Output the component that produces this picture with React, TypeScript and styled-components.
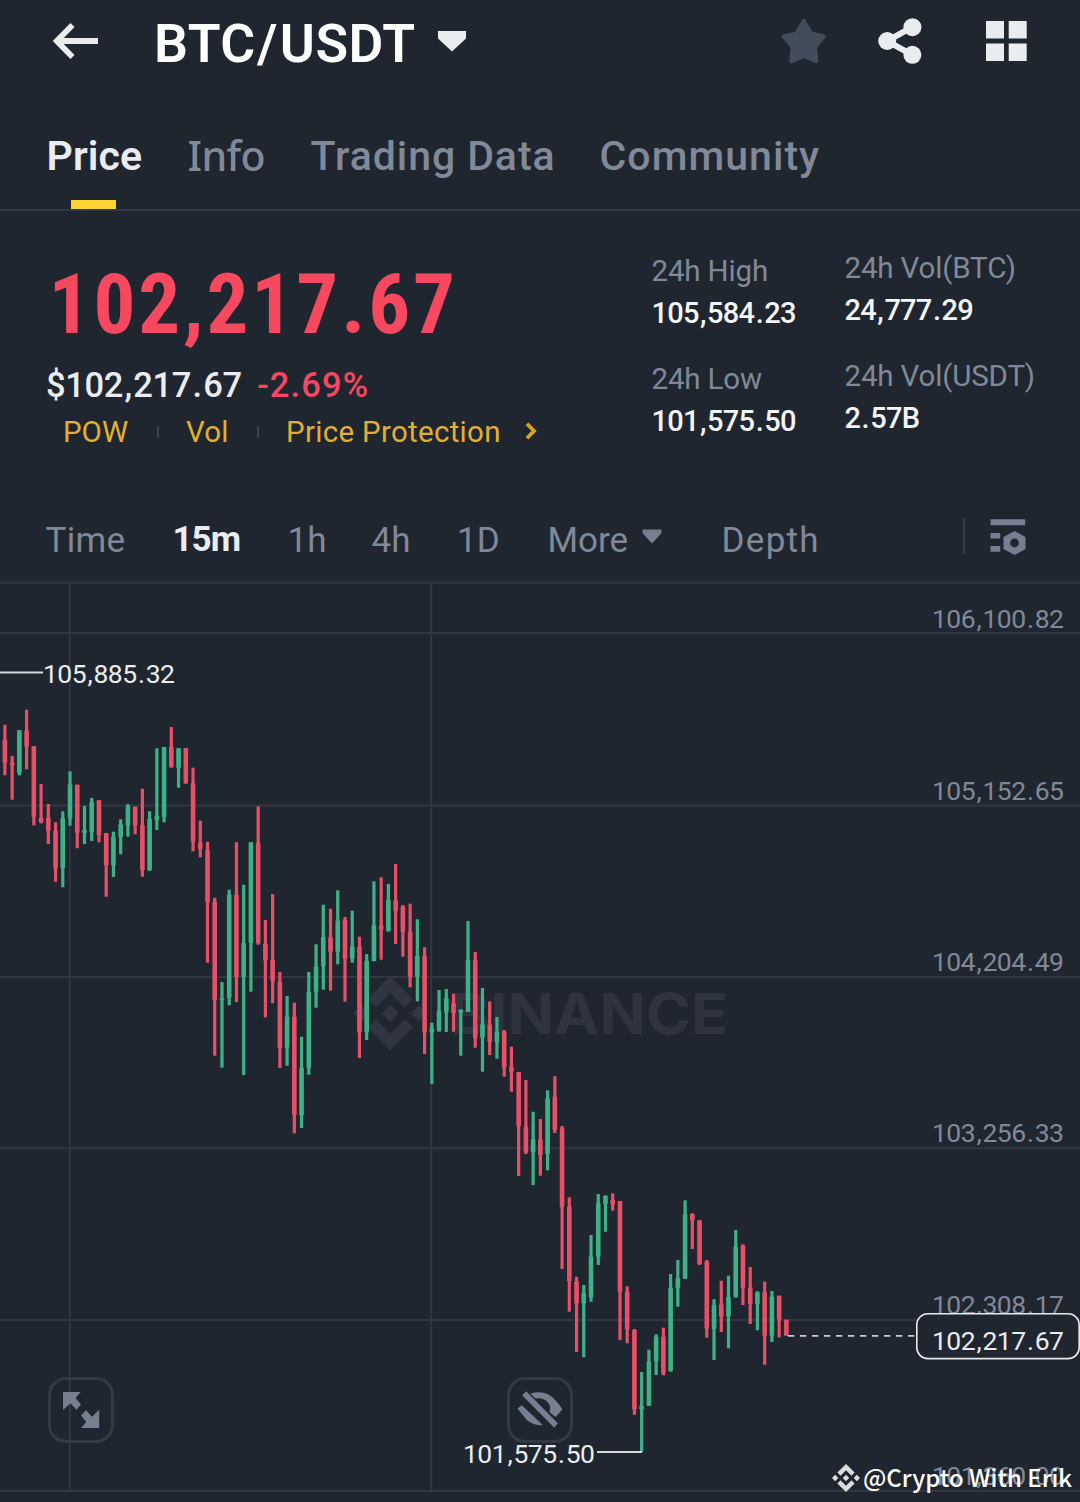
import React from "react";
import styled, { createGlobalStyle } from "styled-components";

const color = {
  bg: "#1f2630",
  text: "#eaecf0",
  muted: "#818998",
  icon: "#767f90",
  line: "#303742",
  up: "#3eb287",
  down: "#e85068",
  price: "#f6485f",
  yellow: "#fcd535",
  gold: "#e0b030",
};

const sans = `Roboto, "Noto Sans", sans-serif`;

const GlobalStyle = createGlobalStyle`
  * { box-sizing: border-box; }
  body { margin: 0; background: ${color.bg}; }
`;

const Screen = styled.main`
  width: 1080px;
  height: 1502px;
  overflow: hidden;
  display: flex;
  flex-direction: column;
  background: ${color.bg};
  color: ${color.text};
  font-family: ${sans};
  white-space: nowrap;
`;

/* ---------- header ---------- */

const Header = styled.header`
  height: 87px;
  flex: none;
  display: flex;
  align-items: center;
  padding: 0 53px 5px 52px;
`;

const Pair = styled.h1`
  width: 332px;
  margin: 5px 0 0 8px;
  padding-left: 46px;
  color: #fff;
  font-size: 53.5px;
  line-height: 60px;
  font-weight: 600;
  letter-spacing: 0.4px;
`;

const Slash = styled.span`
  margin: 0 2px 0 1.5px;
`;

const HeaderActions = styled.div`
  display: flex;
  align-items: center;
  margin-left: auto;
`;

const ActionIcon = styled.svg<{ $gap?: number }>`
  display: block;
  flex: none;
  margin-left: ${(p) => p.$gap ?? 0}px;
`;

/* ---------- tabs ---------- */

const Tabs = styled.nav`
  height: 124px;
  flex: none;
  display: flex;
  gap: 46px;
  padding: 44px 0 0 46.5px;
  border-bottom: 2px solid #303741;
`;

const Tab = styled.div<{ $width: number; $active?: boolean; $track: number }>`
  width: ${(p) => p.$width}px;
  display: flex;
  flex-direction: column;
  justify-content: space-between;
  color: ${(p) => (p.$active ? color.text : color.muted)};
  font-size: 41px;
  line-height: 50px;
  font-weight: ${(p) => (p.$active ? 600 : 500)};
  letter-spacing: ${(p) => p.$track}px;
`;

const SerifTab = styled(Tab)`
  font-family: "Noto Sans", sans-serif;
  font-weight: 550;
  line-height: 48px;
`;

const Underline = styled.span`
  width: 45px;
  height: 9px;
  margin-left: 24.5px;
  background: ${color.yellow};
`;

/* ---------- quote ---------- */

const Quote = styled.section`
  height: 289px;
  flex: none;
  display: grid;
  grid-template-columns: 605.5px 193px 1fr;
  padding-left: 46px;
`;

const Main = styled.div`
  padding-top: 49px;
`;

const LastPrice = styled.div`
  padding-left: 2.5px;
  color: ${color.price};
  font-family: "Roboto Condensed", Roboto, sans-serif;
  font-size: 83px;
  line-height: 90px;
  font-weight: 700;
  letter-spacing: 2.95px;
`;

const Fiat = styled.div`
  display: flex;
  margin-top: 12px;
  height: 46px;
  font-size: 34.5px;
  line-height: 46px;
  font-weight: 500;
  letter-spacing: -0.4px;
`;

const FiatPrice = styled.span`
  width: 211px;
`;

const Change = styled.span`
  color: ${color.price};
  letter-spacing: 1.1px;
`;

const TagRow = styled.div`
  display: flex;
  align-items: center;
  height: 46px;
  margin-top: 1px;
  padding-left: 17px;
  color: ${color.gold};
  font-size: 29.5px;
`;

const Tag = styled.span<{ $width: number; $track?: number }>`
  width: ${(p) => p.$width}px;
  letter-spacing: ${(p) => p.$track ?? 0}px;
`;

const TagDivider = styled.i<{ $after: number }>`
  width: 2px;
  height: 12px;
  margin-right: ${(p) => p.$after}px;
  background: #3a414c;
`;

const TagArrow = styled.svg`
  margin-top: -2px;
`;

const StatColumn = styled.dl<{ $top: number }>`
  margin: ${(p) => p.$top}px 0 0;
  display: flex;
  flex-direction: column;
  gap: 24px;
`;

const StatLabel = styled.dt`
  color: ${color.muted};
  font-size: 29.5px;
  line-height: 42px;
  letter-spacing: -0.15px;
`;

const StatValue = styled.dd`
  margin: 0;
  color: #f3f5f8;
  font-size: 29px;
  line-height: 42px;
  font-weight: 500;
  letter-spacing: -0.75px;
`;

const Mark = styled.span`
  margin: 0 0.046em;
`;

/* Digits set tight, with air round the separators. */
const Figures = ({ value }: { value: string }) => (
  <>
    {value.split(/([.,])/).map((part, i) => (i % 2 ? <Mark key={i}>{part}</Mark> : part))}
  </>
);

/* ---------- intervals ---------- */

const Intervals = styled.nav`
  height: 84px;
  flex: none;
  display: grid;
  grid-template-columns: 127px 115px 84px 85.5px 90.5px 174px 1fr 2px 115px;
  align-items: center;
  padding-left: 45.5px;
  border-bottom: 3px solid #2a313c;
`;

const Interval = styled.div<{ $active?: boolean; $track?: number }>`
  display: flex;
  align-items: center;
  gap: 14px;
  margin-top: ${(p) => (p.$active ? -2 : 0)}px;
  color: ${(p) => (p.$active ? color.text : color.muted)};
  font-size: 35px;
  line-height: 42px;
  font-weight: ${(p) => (p.$active ? 700 : 400)};
  letter-spacing: ${(p) => p.$track ?? 0}px;
`;

const Separator = styled.i`
  height: 36px;
  margin-top: -9px;
  background: #363d48;
`;

const SettingsIcon = styled.svg`
  display: block;
  margin: -6px 0 0 25px;
`;

const MoreCaret = styled.svg`
  margin-top: -8px;
`;

/* ---------- chart ---------- */

const ChartArea = styled.section`
  position: relative;
  height: 918px;
  flex: none;
`;

const ChartSvg = styled.svg`
  display: block;
  font-family: ${sans};
  font-size: 26.5px;
  letter-spacing: -0.55px;
`;

const FloatingButton = styled.button<{ $left: number }>`
  position: absolute;
  left: ${(p) => p.$left}px;
  top: 793px;
  width: 66px;
  height: 66px;
  padding: 0;
  border: 3px solid #333a46;
  border-radius: 18px;
  background: transparent;
`;

const ButtonIcon = styled.svg`
  display: block;
  margin: -3px;
`;

const Attribution = styled.div`
  position: absolute;
  left: 832px;
  bottom: 6px;
  display: flex;
  align-items: center;
  gap: 3px;
  height: 36px;
  color: #fff;
`;

const Handle = styled.span`
  margin-top: -2px;
  font-family: "Noto Sans CJK SC", "Noto Sans", sans-serif;
  font-size: 24px;
  font-weight: 500;
  line-height: 36px;
`;

type Candle = ["u" | "d", number, number, number, number];

/* direction, high, body top, body bottom, low */
const candles: Candle[] = [
  ["d", 724.7, 740, 762.7, 775.3], ["d", 756, 762.7, 765.3, 799.7], ["u", 730.3, 730.3, 773, 775.3],
  ["d", 709.7, 730.7, 746.7, 769.3], ["d", 746.3, 746.3, 816.7, 825.3], ["d", 784, 818, 822, 823.3],
  ["d", 804, 818, 830.7, 844], ["d", 822.3, 830.7, 868.3, 881.7], ["u", 811.3, 818.3, 868.3, 887.3],
  ["u", 771.3, 784.3, 818.3, 825.7], ["d", 784.7, 784.7, 832.7, 848.3], ["u", 806, 830, 832.7, 844],
  ["u", 798, 802, 832, 841], ["d", 800.3, 800.3, 835, 842.3], ["d", 833, 833, 865.3, 896.7],
  ["u", 831.7, 836.7, 865.3, 877], ["u", 819.3, 824.3, 836.7, 854.3], ["u", 804, 806, 825.3, 836.7],
  ["d", 806.7, 806.7, 825.7, 834.3], ["d", 788.7, 825, 870, 876.7], ["u", 811.3, 819, 870, 871],
  ["u", 748.3, 815.7, 820, 830], ["u", 747, 747, 816.7, 822.3], ["d", 727, 747, 766.7, 767.7],
  ["u", 748.3, 748.3, 767.7, 787.7], ["d", 748.3, 748.3, 783.3, 783.7], ["d", 767.7, 783.3, 841.7, 851.3],
  ["d", 820.7, 842.7, 849, 857.3], ["d", 841.7, 850.3, 902, 962.7], ["d", 897.7, 901.7, 1000, 1055.7],
  ["u", 982, 998.3, 1000, 1067.7], ["u", 889.7, 895, 997.7, 1005.3], ["d", 842.3, 895, 977, 1002],
  ["u", 884.7, 943.3, 977, 1075], ["u", 842.3, 842.3, 942.7, 991.7], ["d", 806.3, 842.7, 943.3, 944.7],
  ["d", 920, 943.7, 960.3, 1017.3], ["d", 894, 960.3, 981, 1003.3], ["d", 972, 982, 1048, 1068],
  ["u", 996, 1016.7, 1047.7, 1065.7], ["d", 1002.7, 1016.7, 1115, 1133.3], ["u", 1036.7, 1067.7, 1115, 1128],
  ["u", 972, 992, 1067.7, 1074.7], ["u", 944.3, 966.7, 991.7, 1007.7], ["u", 904.7, 937.3, 966, 989.7],
  ["d", 908.7, 937.3, 951.7, 990.7], ["u", 890.3, 920.7, 951.7, 964.3], ["d", 917, 920, 958.7, 1001.7],
  ["u", 910.7, 946.7, 958.7, 962.7], ["d", 936.7, 946.7, 1032.3, 1058], ["u", 954, 961, 1032.3, 1040],
  ["u", 881.3, 925.3, 961, 961.3], ["d", 877.3, 925.7, 929.3, 959.7], ["u", 884, 900, 930.7, 931.7],
  ["d", 864, 900.7, 910.7, 944], ["d", 905, 906.7, 931.7, 956.7], ["d", 903.7, 931.7, 976.7, 987.3],
  ["u", 919.3, 956, 976.7, 1001.3], ["d", 947.3, 956, 1032.3, 1054], ["u", 1022.7, 1028.3, 1032.3, 1084],
  ["u", 990, 1011, 1031, 1031.7], ["u", 989, 998.3, 1012.3, 1032], ["d", 993.7, 1003.3, 1013.3, 1031.7],
  ["u", 1009.7, 1009.7, 1012.3, 1055.7], ["u", 921, 960, 1011.7, 1012], ["d", 952, 960.3, 1037.7, 1047.7],
  ["u", 988, 1024.3, 1037.7, 1071.7], ["d", 1001.3, 1024.7, 1041.7, 1055], ["u", 1017, 1032, 1041.7, 1058.7],
  ["d", 1030, 1031.7, 1067.3, 1076.7], ["d", 1046.7, 1066.7, 1071.7, 1091.7], ["d", 1072, 1072, 1126, 1176],
  ["d", 1080, 1126.7, 1152.3, 1154], ["u", 1111.7, 1139.3, 1152.3, 1185], ["d", 1119, 1139.3, 1155, 1175.7],
  ["u", 1090.3, 1098.3, 1154, 1170.3], ["d", 1076.3, 1096.7, 1130, 1133], ["d", 1126, 1128.3, 1206.7, 1269],
  ["d", 1197.3, 1206.7, 1281, 1311.7], ["d", 1276.7, 1281.7, 1303.3, 1352], ["u", 1285, 1293.3, 1303.3, 1357.3],
  ["u", 1235, 1256.7, 1297.3, 1301.7], ["u", 1194, 1203.3, 1256.7, 1265], ["u", 1195.3, 1196, 1204, 1231.7],
  ["d", 1193.3, 1200, 1204.7, 1210.7], ["d", 1201, 1201, 1291.7, 1340], ["d", 1286.3, 1291.7, 1329.3, 1343.3],
  ["d", 1329, 1330, 1409.3, 1414.7], ["u", 1372, 1406, 1409.3, 1452], ["u", 1349.7, 1361.7, 1405.7, 1406],
  ["u", 1334.3, 1336.7, 1361, 1375], ["d", 1327.7, 1336.7, 1373.3, 1375.3], ["u", 1274, 1287.7, 1371, 1371.7],
  ["u", 1260, 1278.3, 1287.7, 1306.7], ["u", 1200.3, 1214, 1278.3, 1279], ["d", 1213.3, 1214, 1220.3, 1249],
  ["d", 1220.3, 1220.3, 1264, 1265], ["d", 1260, 1261.3, 1328.3, 1337.7], ["u", 1299.3, 1305, 1329, 1360],
  ["d", 1280.7, 1304.3, 1316.7, 1332], ["u", 1275.7, 1297.3, 1316, 1348.3], ["u", 1230, 1246.7, 1296.7, 1297.7],
  ["d", 1244.3, 1245.7, 1287.7, 1305], ["d", 1267, 1287.7, 1304, 1324], ["u", 1291.3, 1292.3, 1304, 1330.3],
  ["d", 1281.7, 1292.3, 1335.7, 1364.7], ["u", 1291, 1296.7, 1335.7, 1342], ["d", 1295.7, 1295.7, 1319.3, 1337.3],
  ["d", 1319.7, 1319.7, 1335.7, 1335.7],
];

const gridRows = [
  { y: 633, label: "106,100.82", base: 628 },
  { y: 805.5, label: "105,152.65", base: 800 },
  { y: 977, label: "104,204.49", base: 971 },
  { y: 1148.3, label: "103,256.33", base: 1142 },
  { y: 1320, label: "102,308.17", base: 1314 },
  { y: 1491, label: "101,360.00", base: 1485 },
];

const firstX = 4.9;
const pitch = 7.236;

const BinanceMark = ({ fill }: { fill: string }) => (
  <path
    fill={fill}
    d="M38.73 53.2l24.59-24.58 24.6 24.6 14.3-14.31L63.32 0l-38.9 38.9zM0 63.31L14.3 49l14.31 14.31-14.31 14.3zM38.73 73.41L63.32 98l24.6-24.6 14.31 14.29-38.91 38.92-38.91-38.88zM98 63.31L112.3 49l14.31 14.3-14.31 14.32zM77.83 63.3L63.32 48.78 48.81 63.28l14.51 14.5z"
  />
);

const PriceLabel = ({ x, y, value }: { x: number; y: number; value: string }) => (
  <text x={x} y={y}>
    {value.split(/([.,])/).map((part, i) => (
      <tspan key={i} dx={i ? 1.4 : 0}>{part}</tspan>
    ))}
  </text>
);

const Chart = () => (
  <ChartSvg width="1080" height="918" viewBox="0 584 1080 918">
    <g stroke={color.line} strokeWidth="1.9">
      <path d="M69.8 584V1491M431.2 584V1491" />
      {gridRows.map((r) => (
        <path key={r.y} d={`M0 ${r.y}H1080`} />
      ))}
    </g>
    <g transform="translate(353.2 976.3) scale(.585)">
      <BinanceMark fill="#303541" />
    </g>
    <text x="450" y="1033.5" fontFamily="Inter, sans-serif" fontWeight="700" fontSize="57" letterSpacing="0" textLength="278" lengthAdjust="spacingAndGlyphs" fill="#2e333f">
      BINANCE
    </text>
    <g fill={color.muted}>
      {gridRows.map((r) => (
        <PriceLabel key={r.label} x={932} y={r.base} value={r.label} />
      ))}
    </g>
    {candles.map(([dir, high, top, bottom, low], i) => {
      const x = firstX + i * pitch;
      return (
        <g key={i} fill={dir === "u" ? color.up : color.down}>
          <rect x={x - 1.6} y={high} width="3.2" height={low - high} />
          <rect x={x - 2.3} y={top} width="4.6" height={bottom - top} />
        </g>
      );
    })}
    <path d="M0 672.5H43M597 1452H642" stroke="#d5dade" strokeWidth="1.8" />
    <path d="M788 1335.8H916" stroke="#c9ced6" strokeWidth="1.8" strokeDasharray="6.3 5.7" />
    <rect x="916.8" y="1313.8" width="162.4" height="44.8" rx="11" fill={color.bg} stroke="#e6e9ed" strokeWidth="1.6" />
    <g fill={color.text}>
      <PriceLabel x={43} y={682.5} value="105,885.32" />
      <PriceLabel x={463} y={1462.5} value="101,575.50" />
      <PriceLabel x={932} y={1349.5} value="102,217.67" />
    </g>
  </ChartSvg>
);

export default function App() {
  return (
    <>
      <GlobalStyle />
      <Screen>
        <Header>
          <ActionIcon width="48" height="40" viewBox="0 0 48 40" fill="none" stroke={color.text} strokeWidth="5.8">
            <path d="M46 20H5M20.5 4L4.8 20l15.7 16" />
          </ActionIcon>
          <Pair>
            BTC<Slash>/</Slash>USDT
          </Pair>
          <ActionIcon width="30" height="22" viewBox="0 0 30 22" fill={color.text} $gap={-3}>
            <path d="M1 1h28v7.5L15 21.5 1 8.5z" />
          </ActionIcon>
          <HeaderActions>
            <ActionIcon width="46" height="46" viewBox="781 18.5 46 46" fill="#434c5a" stroke="#434c5a" strokeWidth="4" strokeLinejoin="round">
              <path d="M803.8 21.3L811 34L823.8 37L815 47.5L816.3 61.8L803.8 56.5L791.3 61.8L792.6 47.5L783.8 37L796.6 34Z" />
            </ActionIcon>
            <ActionIcon width="44" height="46" viewBox="878 18 44 46" fill={color.text} stroke={color.text} strokeWidth="6" $gap={51}>
              <path d="M912.2 27.2L887 41l25.2 13.8" fill="none" />
              <g stroke="none">
                <circle cx="912.4" cy="27.2" r="9" />
                <circle cx="887.2" cy="41" r="9" />
                <circle cx="912.4" cy="54.8" r="9" />
              </g>
            </ActionIcon>
            <ActionIcon width="41" height="40" viewBox="0 0 41 40" fill={color.text} $gap={64}>
              <path d="M0 0h18v17.5H0zM22.7 0h18v17.5h-18zM0 22.5h18V40H0zM22.7 22.5h18V40h-18z" />
            </ActionIcon>
          </HeaderActions>
        </Header>

        <Tabs>
          <Tab $width={95} $track={0.1} $active>
            Price
            <Underline />
          </Tab>
          <SerifTab $width={77} $track={-0.6}>Info</SerifTab>
          <Tab $width={243} $track={0.93}>Trading Data</Tab>
          <Tab $width={222} $track={1.05}>Community</Tab>
        </Tabs>

        <Quote>
          <Main>
            <LastPrice>102,217.67</LastPrice>
            <Fiat>
              <FiatPrice>
                <Figures value="$102,217.67" />
              </FiatPrice>
              <Change>-2.69%</Change>
            </Fiat>
            <TagRow>
              <Tag $width={93.5}>POW</Tag>
              <TagDivider $after={27.5} />
              <Tag $width={70.5} $track={0.2}>Vol</Tag>
              <TagDivider $after={27.5} />
              <Tag $width={238.5} $track={0.3}>Price Protection</Tag>
              <TagArrow width="12" height="18" viewBox="0 0 12 18" fill="none" stroke="#dca61c" strokeWidth="3.8">
                <path d="M2 1.8L9 9l-7 7.2" />
              </TagArrow>
            </TagRow>
          </Main>
          <StatColumn $top={39}>
            <div>
              <StatLabel>24h High</StatLabel>
              <StatValue>
                <Figures value="105,584.23" />
              </StatValue>
            </div>
            <div>
              <StatLabel>24h Low</StatLabel>
              <StatValue>
                <Figures value="101,575.50" />
              </StatValue>
            </div>
          </StatColumn>
          <StatColumn $top={36}>
            <div>
              <StatLabel>24h Vol(BTC)</StatLabel>
              <StatValue>
                <Figures value="24,777.29" />
              </StatValue>
            </div>
            <div>
              <StatLabel>24h Vol(USDT)</StatLabel>
              <StatValue>
                <Figures value="2.57B" />
              </StatValue>
            </div>
          </StatColumn>
        </Quote>

        <Intervals>
          <Interval $track={0.3}>Time</Interval>
          <Interval $track={-1} $active>15m</Interval>
          <Interval>1h</Interval>
          <Interval>4h</Interval>
          <Interval>1D</Interval>
          <Interval>
            More
            <MoreCaret width="20" height="15" viewBox="0 0 20 15" fill={color.icon}>
              <path d="M.5.5h19V4L10 14.5.5 4z" />
            </MoreCaret>
          </Interval>
          <Interval $track={1.3}>Depth</Interval>
          <Separator />
          <SettingsIcon width="36" height="37" viewBox="991.5 519 36 37" fill={color.icon}>
            <path d="M992 519.3h34.7v6H992zM992 533h9.7v5.5H992zM992 546h9.7v5.8H992z" />
            <path fillRule="evenodd" d="M1016 531l11 6v12l-11 6-11-6v-12zM1016 538.6a4.4 4.4 0 1 0 0 8.8 4.4 4.4 0 0 0 0-8.8z" />
          </SettingsIcon>
        </Intervals>

        <ChartArea>
          <Chart />
          <FloatingButton $left={48} aria-label="Full screen">
            <ButtonIcon width="66" height="66" viewBox="-1 -1 66 66" fill={color.icon}>
              <path d="M14 14h17.5l-5 6 5.5 6.5-4.5 5.2-6-6.4L14 32zM50.2 50H32l5.3-6-5.3-6.5 5-5.2 6 6.4 7.2-7z" />
            </ButtonIcon>
          </FloatingButton>
          <FloatingButton $left={507} aria-label="Hide overlays">
            <ButtonIcon width="66" height="66" viewBox="0 0 66 66" fill={color.icon}>
              <path d="M15.2 18.3l4-4 31.6 32-3.6 4.4zM10.5 31.6L19.8 43Q26 48.5 36 48.3L14.8 28.3z" />
              <path d="M23.5 16.5Q33 13.5 41 17.3Q48 21 55.5 32.3L48.5 40L42.5 35Q44.5 29 40.5 25Q36 20.5 30 21.5L28.5 21.5z" />
            </ButtonIcon>
          </FloatingButton>
          <Attribution>
            <svg width="28" height="28" viewBox="0 0 126.61 126.61">
              <BinanceMark fill="#dcdcdc" />
            </svg>
            <Handle>@Crypto With Erik</Handle>
          </Attribution>
        </ChartArea>
      </Screen>
    </>
  );
}
